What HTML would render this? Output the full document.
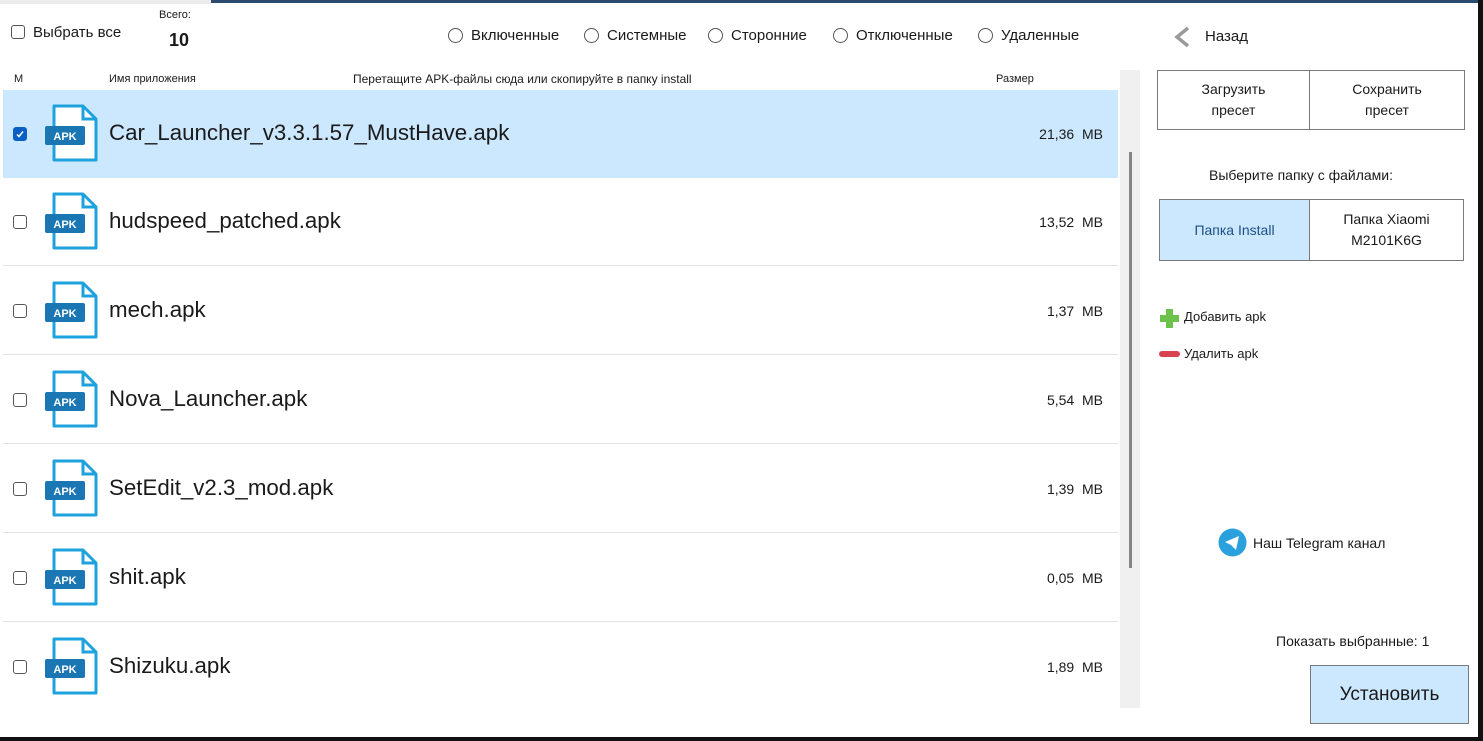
<!DOCTYPE html>
<html><head><meta charset="utf-8"><style>
*{margin:0;padding:0;box-sizing:border-box}
body{width:1483px;height:741px;overflow:hidden;background:#fff;font-family:"Liberation Sans","DejaVu Sans",sans-serif;color:#1a1a1a;position:relative}
.a{position:absolute;white-space:nowrap}
.cb{position:absolute;width:14px;height:14px;border:1px solid #555;border-radius:3px;background:#fff}
.rd{position:absolute;width:15px;height:15px;border:1px solid #555;border-radius:50%}
.row{position:absolute;left:3px;width:1115px;height:88px;border-bottom:1px solid #e3e3e3}
.row .nm{position:absolute;left:106px;top:30px;font-size:22.3px}
.row .sz{position:absolute;right:15px;top:36px;font-size:14px}
.row .cb{left:10px;top:37px}
.row svg{position:absolute;left:36px;top:14px}
.btn{position:absolute;border:1px solid #7a7a7a;display:flex;align-items:center;justify-content:center;text-align:center;font-size:14px;line-height:21px}
</style></head><body>
<div class="a" style="left:0;top:0;width:211px;height:4px;background:#ececec"></div>
<div class="a" style="left:211px;top:0;width:1272px;height:3px;background:#2b4a6e"></div>
<div class="a" style="left:1478px;top:0;width:5px;height:741px;background:#111"></div>
<div class="a" style="left:0;top:737px;width:1483px;height:4px;background:#111"></div>

<div class="cb" style="left:11px;top:25px"></div>
<div class="a" style="left:33px;top:24px;font-size:15px">Выбрать все</div>
<div class="a" style="left:159px;top:9px;font-size:11px">Всего:</div>
<div class="a" style="left:169px;top:30px;font-size:18px;font-weight:bold">10</div>

<div class="rd" style="left:448px;top:28px"></div><div class="a" style="left:471px;top:27px;font-size:15px">Включенные</div>
<div class="rd" style="left:584px;top:28px"></div><div class="a" style="left:607px;top:27px;font-size:15px">Системные</div>
<div class="rd" style="left:708px;top:28px"></div><div class="a" style="left:731px;top:27px;font-size:15px">Сторонние</div>
<div class="rd" style="left:833px;top:28px"></div><div class="a" style="left:856px;top:27px;font-size:15px">Отключенные</div>
<div class="rd" style="left:978px;top:28px"></div><div class="a" style="left:1001px;top:27px;font-size:15px">Удаленные</div>

<div class="a" style="left:14px;top:73px;font-size:11px">M</div>
<div class="a" style="left:109px;top:73px;font-size:11px">Имя приложения</div>
<div class="a" style="left:353px;top:72px;font-size:12px">Перетащите APK-файлы сюда или скопируйте в папку install</div>
<div class="a" style="left:996px;top:73px;font-size:11px">Размер</div>

<div class="a" style="left:1120px;top:70px;width:20px;height:638px;background:#f0f0f0"></div>
<div class="a" style="left:1129px;top:152px;width:3px;height:416px;background:#858585"></div>

<svg width="0" height="0" style="position:absolute"><defs>
<g id="ic"><path d="M15 2 H44 L57 15 V56 H15 Z" fill="#fff" stroke="#1ea2de" stroke-width="3" stroke-linejoin="round"/><path d="M44 2 V15 H57" fill="none" stroke="#1ea2de" stroke-width="3"/><rect x="6" y="22" width="40" height="19" rx="2" fill="#1b76b4"/><text x="26" y="36" font-family="Liberation Sans,sans-serif" font-size="11" font-weight="bold" fill="#fff" text-anchor="middle">APK</text></g></defs></svg>

<div class="row" style="top:90px;background:#cce8ff;border-bottom:none"><div class="cb" style="background:#0a5fc4;border-color:#0a5fc4"><svg width="12" height="12" style="left:0;top:0" viewBox="0 0 12 12"><path d="M3 6.5 L5 8.5 L9 3.5" stroke="#fff" stroke-width="1.5" fill="none"/></svg></div><svg width="60" height="58"><use href="#ic"/></svg><div class="nm">Car_Launcher_v3.3.1.57_MustHave.apk</div><div class="sz">21,36&nbsp;&nbsp;MB</div></div>
<div class="row" style="top:178px"><div class="cb"></div><svg width="60" height="58"><use href="#ic"/></svg><div class="nm">hudspeed_patched.apk</div><div class="sz">13,52&nbsp;&nbsp;MB</div></div>
<div class="row" style="top:267px"><div class="cb"></div><svg width="60" height="58"><use href="#ic"/></svg><div class="nm">mech.apk</div><div class="sz">1,37&nbsp;&nbsp;MB</div></div>
<div class="row" style="top:356px"><div class="cb"></div><svg width="60" height="58"><use href="#ic"/></svg><div class="nm">Nova_Launcher.apk</div><div class="sz">5,54&nbsp;&nbsp;MB</div></div>
<div class="row" style="top:445px"><div class="cb"></div><svg width="60" height="58"><use href="#ic"/></svg><div class="nm">SetEdit_v2.3_mod.apk</div><div class="sz">1,39&nbsp;&nbsp;MB</div></div>
<div class="row" style="top:534px"><div class="cb"></div><svg width="60" height="58"><use href="#ic"/></svg><div class="nm">shit.apk</div><div class="sz">0,05&nbsp;&nbsp;MB</div></div>
<div class="row" style="top:623px;border-bottom:none"><div class="cb"></div><svg width="60" height="58"><use href="#ic"/></svg><div class="nm">Shizuku.apk</div><div class="sz">1,89&nbsp;&nbsp;MB</div></div>

<svg class="a" style="left:1172px;top:26px" width="20" height="22"><path d="M16 2 L5 11 L16 20" stroke="#9a9a9a" stroke-width="3.5" fill="none"/></svg>
<div class="a" style="left:1205px;top:28px;font-size:15px">Назад</div>

<div class="btn" style="left:1157px;top:70px;width:153px;height:60px">Загрузить<br>пресет</div>
<div class="btn" style="left:1309px;top:70px;width:156px;height:60px">Сохранить<br>пресет</div>
<div class="a" style="left:1209px;top:167px;font-size:14px">Выберите папку с файлами:</div>
<div class="btn" style="left:1159px;top:199px;width:151px;height:62px;background:#cce8ff;color:#1e4f87">Папка Install</div>
<div class="btn" style="left:1309px;top:199px;width:155px;height:62px">Папка Xiaomi<br>M2101K6G</div>

<svg class="a" style="left:1159px;top:308px" width="22" height="22"><path d="M7 1h7v6h6v7h-6v6H7v-6H1V7h6z" fill="#6cc24a"/></svg>
<div class="a" style="left:1184px;top:309px;font-size:13px">Добавить apk</div>
<div class="a" style="left:1159px;top:351px;width:21px;height:6px;border-radius:3px;background:#d9434f"></div>
<div class="a" style="left:1184px;top:346px;font-size:13px">Удалить apk</div>

<svg class="a" style="left:1218px;top:528px" width="29" height="29"><circle cx="14.5" cy="14.5" r="14" fill="#2aa0dc"/><path d="M7 14 L21 8 L18 22 L13 17 Z" fill="#fff"/></svg>
<div class="a" style="left:1253px;top:535px;font-size:14px">Наш Telegram канал</div>

<div class="a" style="left:1276px;top:633px;font-size:14px">Показать выбранные: 1</div>
<div class="btn" style="left:1310px;top:665px;width:159px;height:59px;background:#cce8ff;font-size:19px">Установить</div>
</body></html>
